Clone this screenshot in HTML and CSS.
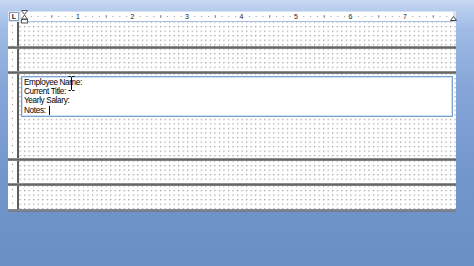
FILE: index.html
```html
<!DOCTYPE html>
<html>
<head>
<meta charset="utf-8">
<link rel="stylesheet" href="styles.css">
</head>
<body>
<div class="app">
  <div class="ruler-row">
    <div class="tab-sel">L</div>
    <div class="hruler">
      <svg class="indent-left" width="7" height="14" viewBox="0 0 7 14">
        <path d="M0.5 0.5 H6.5 L3.5 4.5 Z" fill="#fff" stroke="#555" stroke-width="1"/>
        <path d="M3.5 5 L6.5 9 H0.5 Z" fill="#fff" stroke="#555" stroke-width="1"/>
        <rect x="0.5" y="9.5" width="6" height="3.5" fill="#fff" stroke="#555" stroke-width="1"/>
      </svg>
      <div class="ticks">
        <span class="num lead"></span>
        <span class="num">1</span>
        <span class="num">2</span>
        <span class="num">3</span>
        <span class="num">4</span>
        <span class="num">5</span>
        <span class="num">6</span>
        <span class="num">7</span>
      </div>
      <svg class="indent-right" width="7" height="5" viewBox="0 0 7 5">
        <path d="M0.5 4.5 L3.5 0.5 L6.5 4.5 Z" fill="#fff" stroke="#444" stroke-width="1"/>
      </svg>
    </div>
  </div>
  <div class="design">
    <div class="sec h24"><div class="vr"></div><div class="vl"></div><div class="cv"></div></div>
    <div class="sep"></div>
    <div class="sec h22"><div class="vr"></div><div class="vl"></div><div class="cv"></div></div>
    <div class="sep"></div>
    <div class="sec h84"><div class="vr"></div><div class="vl"></div>
      <div class="cv">
        <div class="textbox">
          <div class="line">Employee Name:</div>
          <div class="line">Current Title:</div>
          <div class="line">Yearly Salary:</div>
          <div class="line">Notes: <span class="caret"></span></div>
          <svg class="ibeam" width="7" height="15" viewBox="0 0 7 15">
            <path d="M0.5 0.5 H2.5 L3.5 1.5 L4.5 0.5 H6.5 M3.5 1.5 V13.5 M0.5 14.5 H2.5 L3.5 13.5 L4.5 14.5 H6.5" fill="none" stroke="#000" stroke-width="1"/>
          </svg>
        </div>
      </div>
    </div>
    <div class="sep"></div>
    <div class="sec h22"><div class="vr"></div><div class="vl"></div><div class="cv"></div></div>
    <div class="sep"></div>
    <div class="sec h23"><div class="vr"></div><div class="vl"></div><div class="cv"></div></div>
    <div class="shadow"></div>
  </div>
</div>
</body>
</html>
```
FILE: styles.css
```css
html, body {
  margin: 0;
  padding: 0;
}
body {
  width: 474px;
  height: 266px;
  overflow: hidden;
  font-family: "Liberation Sans", Arial, sans-serif;
  background: linear-gradient(to bottom, #c7d9f1 0px, #b6cced 10px, #9fbbe5 30px, #85a5d8 90px, #7396cb 170px, #6b8ec4 266px);
}
.app {
  padding-top: 11px;
  padding-left: 8px;
  width: 448px;
}
.ruler-row {
  display: flex;
  height: 11px;
  background: #d7e3f3;
  align-items: center;
}
.tab-sel {
  width: 8px;
  height: 7px;
  margin-left: 1px;
  border: 1px solid #8c9db6;
  background: #fff;
  font-size: 7px;
  font-weight: bold;
  line-height: 7px;
  text-align: center;
  color: #222;
}
.hruler {
  position: relative;
  margin-left: 2px;
  width: 432px;
  height: 9px;
  background: #fff;
  border-bottom: 1px solid #a9c0e2;
}
.ticks {
  display: flex;
  height: 9px;
  margin-left: 2.5px;
  background-image:
    linear-gradient(to right, #8a8a8a 0 1px, transparent 1px),
    linear-gradient(to right, #9a9a9a 0 1px, transparent 1px);
  background-size: 54.5px 3px, 6.8125px 1px;
  background-position: 27.25px 3px, 0 4px;
  background-repeat: repeat-x, repeat-x;
}
.num {
  width: 54.5px;
  flex: none;
  font-size: 7px;
  line-height: 9px;
  text-align: center;
  color: #222;
  background: #fff;
  background-clip: content-box;
  padding: 0 24px;
  box-sizing: border-box;
}
.num.lead {
  width: 27.25px;
  padding: 0;
  background: transparent;
}
.indent-left {
  position: absolute;
  left: 0;
  top: -2px;
  z-index: 2;
}
.indent-right {
  position: absolute;
  right: -4px;
  top: 4px;
  z-index: 2;
}
.design {
  display: flex;
  flex-direction: column;
}
.sec {
  display: flex;
}
.h24 { height: 24px; }
.h22 { height: 22px; }
.h23 { height: 23px; }
.h84 { height: 84px; }
.vr {
  width: 9px;
  flex: none;
  background-color: #fff;
  background-image: linear-gradient(to bottom, #8a8a8a 0 1px, transparent 1px);
  background-size: 1px 6.8125px;
  background-position: 4px 3px;
  background-repeat: repeat-y;
}
.vl {
  width: 2px;
  flex: none;
  background: #5c5c5c;
}
.cv {
  flex: 1;
  padding: 2px 3px 0 2px;
  background-color: #fff;
  background-image: radial-gradient(circle at 0.6px 0.6px, #a4a4a4 0.6px, transparent 0.95px);
  background-size: 4.54px 4.54px;
  background-position: 5px 4px;
}
.sep {
  height: 3px;
  background: linear-gradient(to bottom, #a3a3a3, #666 50%, #8d8d8d);
}
.shadow {
  height: 3px;
  background: linear-gradient(to bottom, #8a8c90, #6f7a8c);
}
.textbox {
  position: relative;
  height: 37px;
  padding: 1px 2px;
  border: 1px solid #78a3d4;
  box-shadow: inset 0 0 0 1px #cfe0f3;
  background: #fff;
}
.line {
  font-size: 8.2px;
  letter-spacing: -0.35px;
  line-height: 9.2px;
  color: #000;
  white-space: nowrap;
}
.caret {
  display: inline-block;
  width: 1px;
  height: 9px;
  background: #000;
  vertical-align: -2px;
  margin-left: 1px;
}
.ibeam {
  position: absolute;
  left: 46px;
  top: -1px;
}
```
